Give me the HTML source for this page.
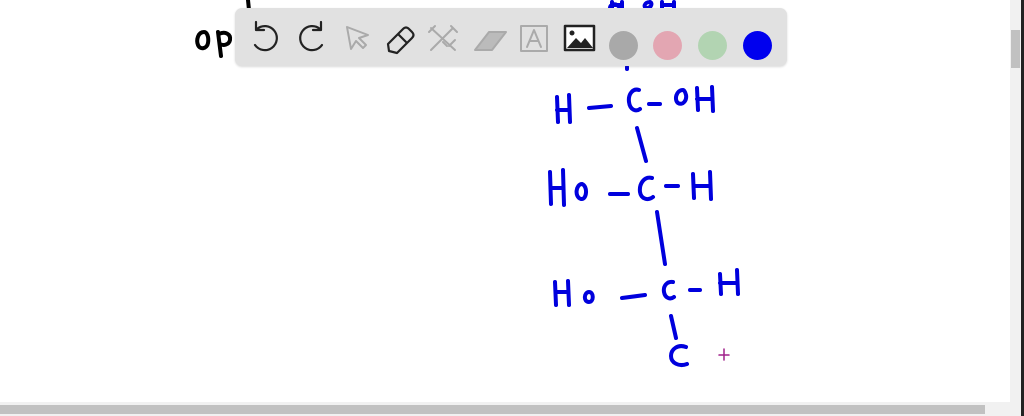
<!DOCTYPE html>
<html><head><style>
body{margin:0;width:1024px;height:416px;background:#fff;overflow:hidden;position:relative;font-family:"Liberation Sans",sans-serif}
.tb{position:absolute;left:235px;top:8px;width:552px;height:58px;background:#e1e1e1;border-radius:7px;box-shadow:0 1px 2px rgba(0,0,0,.15)}
.dot{position:absolute;top:23px;width:29px;height:29px;border-radius:50%}
</style></head><body>
<svg width="1024" height="416" style="position:absolute;left:0;top:0" fill="none" stroke-linecap="round" stroke-linejoin="round">
<g stroke="#000" stroke-width="4">
<path d="M204 32c-6 0-8 8-6 13 2 5 9 4 10-2 1-6-1-11-4-11z"/>
<path d="M218 32l3 24M219 34c6-3 12 0 11 6-1 5-7 6-10 4"/>
<path d="M248 0l1 10"/>
</g>
<g stroke="#0000dd" stroke-width="4">
<path d="M612 2v6M622 2v6M612 5h10M650 2c-6 0-7 6-3 6 4 0 6-5 3-6M662 2v6M674 2v6M662 5h12M620 8c-4-6-10-4-10 0"/>
<path d="M627 67v2"/>
<path d="M557 97l1 25M569 95l1 27M557 110h12M589 108l22-2M639 90c-6-2-11 4-10 12 1 8 7 10 11 7M649 104h11M683 90c-7 0-9 10-5 13 5 3 9-3 8-8-1-4-2-5-3-5M697 88l1 22M712 87l1 24M697 99h15"/>
<path d="M637 128l9 33"/>
<path d="M550 172l1 32M563 170l1 35M551 188h12M582 184c-6 0-8 13-1 15 6 1 7-13 1-15M610 194h18M652 178c-8-2-13 6-12 14 1 7 8 9 13 5M666 186h12M693 174l1 24M710 172l1 27M694 186h16"/>
<path d="M657 212l8 52"/>
<path d="M555 282l1 23M568 281l1 24M556 292h12M589 292c-5 0-6 10 0 10 5 0 5-10 0-10M622 298l23-3M673 282c-6-1-10 4-9 10 1 6 6 8 10 5M690 290h10M720 274l1 20M737 270l1 24M720 283h17"/>
<path d="M671 316l5 22"/>
<path d="M686 347c-8-3-15 2-15 9 0 7 8 11 16 8"/>
</g>
<path d="M724 349v11M719 355h10" stroke="#a0208a" stroke-width="1.5"/>
</svg>
<div class="tb">
<svg width="552" height="58" style="position:absolute;left:0;top:0" fill="none" stroke-linecap="round" stroke-linejoin="round">
<g stroke="#222" stroke-width="2.2">
<path d="M22 21a12 12 0 1 1-2 16M21 14v8h8"/>
<path d="M85 21a12 12 0 1 0 2 16M86 14v8h-8"/>
<path d="M154 43l-1-7 15-15c2-2 4-2 6 0l3 3c2 2 2 4 0 6l-15 15z M163 26l8 8"/>
</g>
<g stroke="#aaa" stroke-width="2">
<path d="M112 19l4 22 5-8 7 7 3-3-7-7 9-3z"/>
<path d="M196 20l24 22M218 20l-22 22M194 24l6-6M214 38l6-6M216 18l6 6 M208 34l4 4"/>
<path d="M240 42l14-18h17l-14 18z" fill="#bbb"/>
<rect x="286" y="18" width="26" height="25"/>
<path d="M292 39l7-17 7 17M295 33h8"/>
</g>
<rect x="330" y="18" width="29" height="24" stroke="#222" stroke-width="2.5" fill="#fff"/>
<path d="M332 40l9-10 5 5 4-5 8 10z" fill="#222"/><circle cx="337" cy="25" r="2.5" fill="#222"/>
</svg>
<div class="dot" style="left:374px;background:#a9a9a9"></div>
<div class="dot" style="left:418px;background:#e3a6b2"></div>
<div class="dot" style="left:463px;background:#b2d4b2"></div>
<div class="dot" style="left:508px;background:#0000ee"></div>
</div>
<div style="position:absolute;left:1010px;top:0;width:11px;height:402px;background:#f1f1f1"></div>
<div style="position:absolute;left:1011px;top:30px;width:9px;height:38px;background:#c1c1c1"></div>
<div style="position:absolute;left:1021px;top:0;width:3px;height:416px;background:#222"></div>
<div style="position:absolute;left:0;top:402px;width:1021px;height:14px;background:#f1f1f1"></div>
<div style="position:absolute;left:0;top:405px;width:985px;height:9px;background:#c1c1c1"></div>
</body></html>
